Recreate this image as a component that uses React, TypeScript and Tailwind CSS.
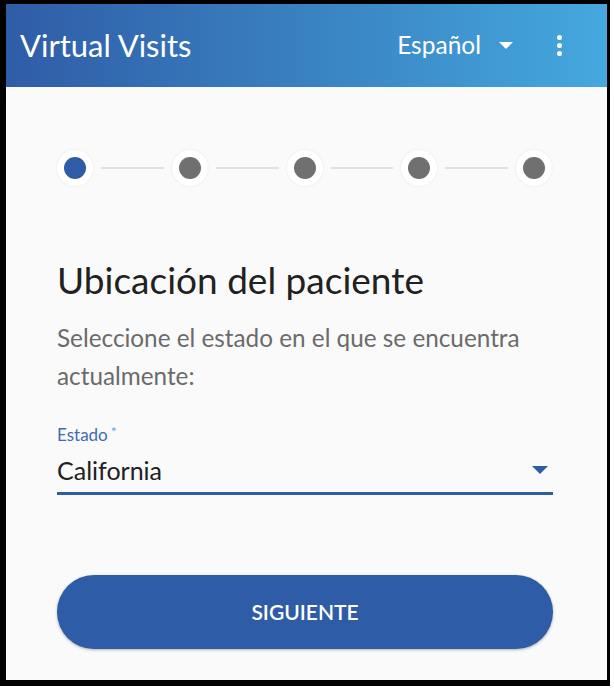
import React, { useState } from 'react';

const steps = [0, 1, 2, 3, 4];

const Stepper: React.FC<{ active: number }> = ({ active }) => (
  <div className="flex items-center pl-[51px] pr-[55px]">
    {steps.map((s) => (
      <React.Fragment key={s}>
        <div className="flex h-[36px] w-[36px] shrink-0 items-center justify-center rounded-full bg-white shadow-[0_0_3px_rgba(0,0,0,0.08)]">
          <div
            className={
              s === active
                ? 'h-[22px] w-[22px] rounded-full bg-[#2f5ca6]'
                : 'h-[22px] w-[22px] rounded-full bg-[#707070]'
            }
          />
        </div>
        {s < steps.length - 1 && <div className="mx-[8px] h-[2px] flex-1 bg-[#e0e0e0]" />}
      </React.Fragment>
    ))}
  </div>
);

export default function App() {
  const [state] = useState('California');

  return (
    <div className="h-[690px] w-[614px] bg-white" style={{ fontFamily: 'Lato, "Noto Sans", sans-serif' }}>
      <div className="flex h-[686px] w-[610px] flex-col border-b-[6px] border-l-[6px] border-r-[3px] border-t-[4px] border-black bg-[#fafafa]">
        {/* Header */}
        <div className="flex h-[83px] shrink-0 items-center bg-gradient-to-r from-[#2f5ca6] to-[#45a8de] pl-[14px] pr-[45px] text-white">
          <div className="text-[31px] leading-none">Virtual Visits</div>
          <div className="ml-auto flex items-center">
            <span className="text-[24.5px] leading-none">Español</span>
            <svg width="14" height="8" viewBox="0 0 14 8" className="ml-[18px]">
              <path d="M0 0h14L7 7z" fill="white" />
            </svg>
            <div className="ml-[44px] flex flex-col gap-[3px]">
              <span className="block h-[5px] w-[5px] rounded-full bg-white" />
              <span className="block h-[5px] w-[5px] rounded-full bg-white" />
              <span className="block h-[5px] w-[5px] rounded-full bg-white" />
            </div>
          </div>
        </div>

        {/* Body */}
        <div className="flex flex-1 flex-col pt-[63px]">
          <Stepper active={0} />

          <div className="pl-[51px] pr-[54px] pt-[72px]">
            <h1 className="text-[37px] leading-[44px] text-[#212121]">Ubicación del paciente</h1>
            <p className="mt-[17px] text-[24.3px] leading-[38px] text-[#6b6b6b]">
              Seleccione el estado en el que se encuentra actualmente:
            </p>

            <div className="mt-[30px]">
              <label className="block text-[17px] leading-[20px] text-[#3f6db3]">
                Estado<span className="ml-[3px] align-top text-[14px] leading-[14px] text-[#5aa8e0]">*</span>
              </label>
              <div className="mt-[10px] flex items-center border-b-[3px] border-[#2f5ca6] pb-[7px]">
                <span className="text-[25px] leading-[30px] text-[#212121]">{state}</span>
                <svg width="16" height="8" viewBox="0 0 16 8" className="ml-auto mr-[5px]">
                  <path d="M0 0h16L8 8z" fill="#2f5ca6" />
                </svg>
              </div>
            </div>

            <button className="mt-[80px] flex h-[74px] w-full items-center justify-center rounded-full bg-[#2f5ca6] text-[21px] font-semibold text-white shadow-[0_1px_3px_rgba(0,0,0,0.3)]">
              SIGUIENTE
            </button>
          </div>
        </div>
      </div>
    </div>
  );
}
